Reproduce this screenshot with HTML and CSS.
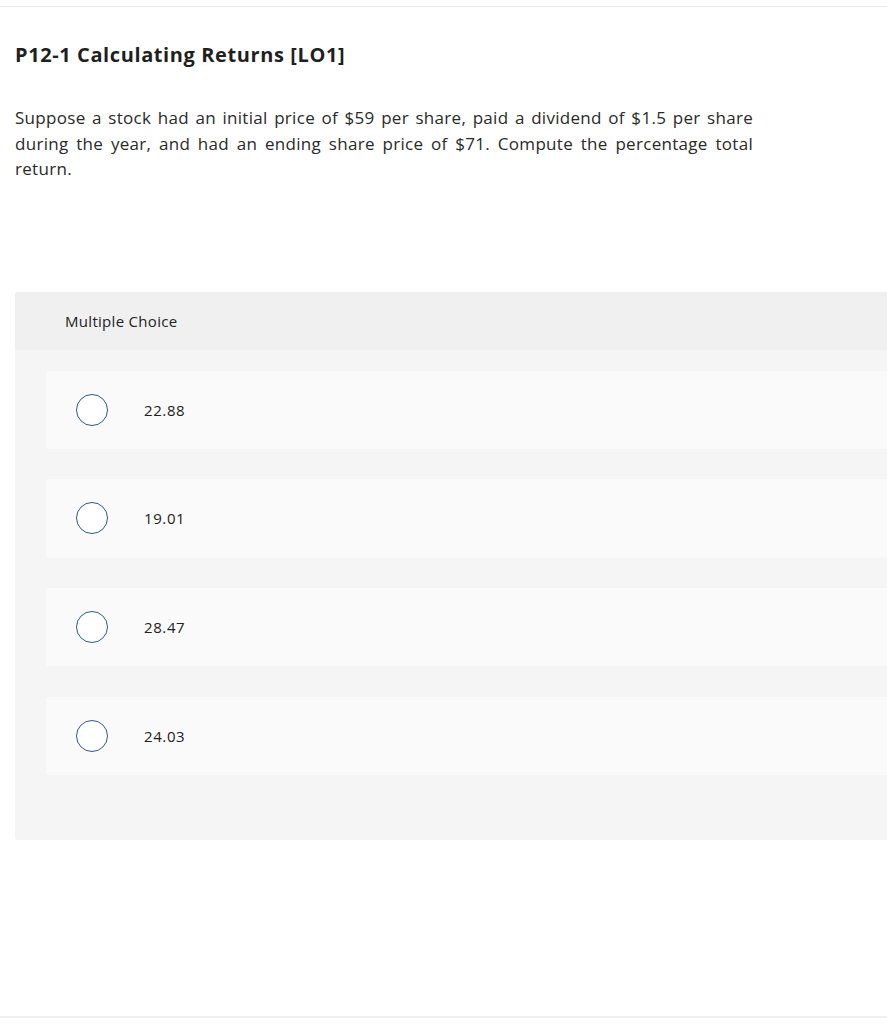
FILE: index.html
```html
<!DOCTYPE html>
<html>
<head>
<meta charset="utf-8">
<link rel="stylesheet" href="styles.css">
</head>
<body>
<div class="topline"></div>
<div class="content">
  <h1 class="title">P12-1 Calculating Returns [LO1]</h1>
  <p class="question">Suppose a stock had an initial price of $59 per share, paid a dividend of $1.5 per share during the year, and had an ending share price of $71. Compute the percentage total return.</p>
  <div class="mc">
    <div class="mc-head">Multiple Choice</div>
    <div class="mc-body">
      <div class="option"><span class="radio"></span><span class="label">22.88</span></div>
      <div class="option"><span class="radio"></span><span class="label">19.01</span></div>
      <div class="option"><span class="radio"></span><span class="label">28.47</span></div>
      <div class="option"><span class="radio"></span><span class="label">24.03</span></div>
    </div>
  </div>
</div>
<div class="bottomline"></div>
</body>
</html>
```
FILE: styles.css
```css
html, body {
  margin: 0;
  padding: 0;
  background: #ffffff;
}
body {
  font-family: "Open Sans", "Liberation Sans", sans-serif;
  color: #222;
  width: 887px;
  height: 1024px;
  overflow: hidden;
  position: relative;
}
.topline {
  margin-top: 6px;
  height: 1px;
  background: #ececec;
}
.content {
  padding-left: 15px;
}
.title {
  margin: 36px 0 0 0;
  font-size: 20px;
  line-height: 24px;
  font-weight: 700;
  color: #1f1f1f;
  letter-spacing: 0.6px;
}
.question {
  margin: 38px 0 0 0;
  width: 738px;
  font-size: 17px;
  line-height: 25.5px;
  letter-spacing: 0.3px;
  text-align: justify;
  color: #2a2a2a;
}
.mc {
  margin-top: 110px;
  background: #f5f5f5;
  border-radius: 3px 0 0 3px;
  padding-bottom: 65px;
}
.mc-head {
  height: 58px;
  background: #f0f0f0;
  display: flex;
  align-items: center;
  padding-left: 50px;
  font-size: 15px;
  letter-spacing: 0.3px;
  color: #222;
  border-radius: 3px 0 0 0;
}
.mc-body {
  padding-top: 21px;
  padding-left: 31px;
  display: flex;
  flex-direction: column;
  gap: 30.3px;
}
.option {
  height: 78.4px;
  background: #fafafa;
  border-radius: 3px 0 0 3px;
  display: flex;
  align-items: center;
  padding-left: 30px;
}
.radio {
  width: 30px;
  height: 30px;
  border: 1.6px solid #2c5a94;
  border-radius: 50%;
  background: #fff;
  flex: none;
}
.label {
  margin-left: 36px;
  font-size: 15px;
  letter-spacing: 0.6px;
  color: #222;
}
.bottomline {
  position: absolute;
  left: 0;
  right: 0;
  top: 1016px;
  height: 2px;
  background: #efefef;
}
```
